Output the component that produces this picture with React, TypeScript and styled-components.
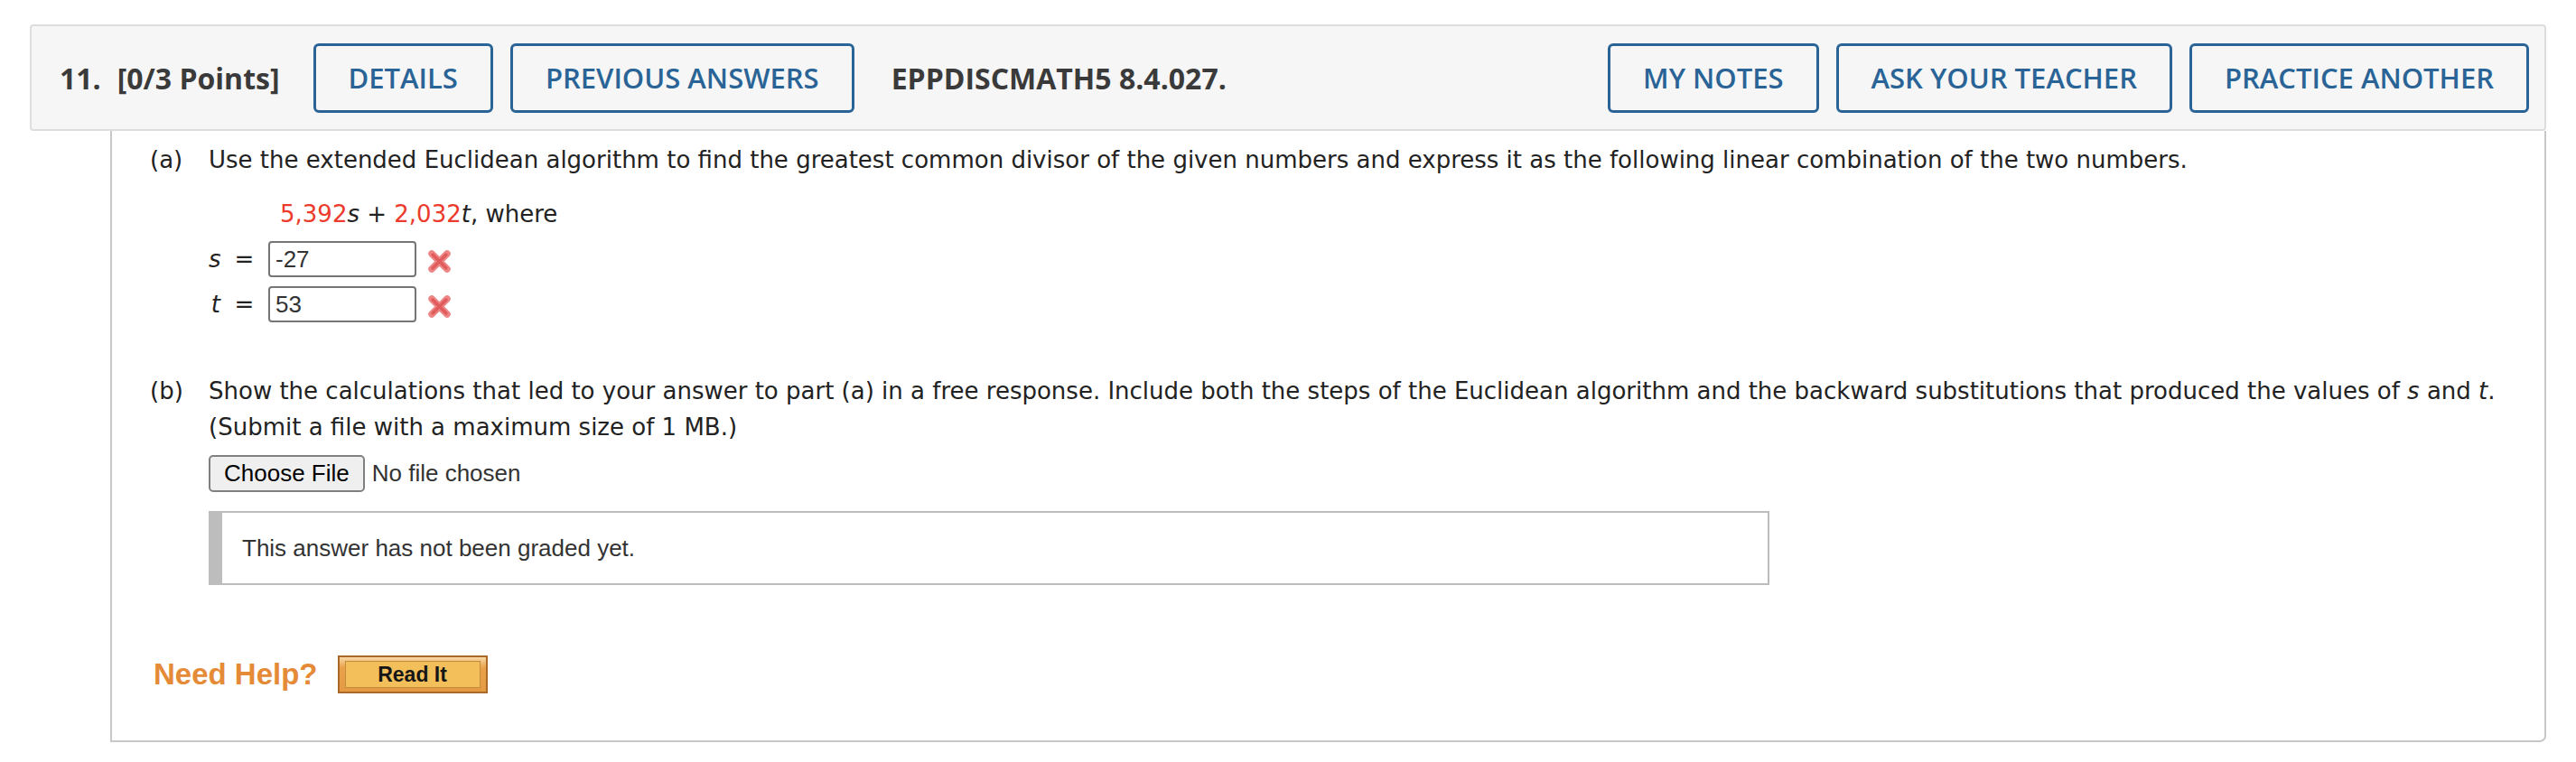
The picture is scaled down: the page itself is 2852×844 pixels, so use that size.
import React from "react";
import styled, { createGlobalStyle } from "styled-components";

const GlobalStyle = createGlobalStyle`
  html, body {
    margin: 0;
    padding: 0;
    background: #ffffff;
  }
  body {
    font-family: "DejaVu Sans", Verdana, sans-serif;
    color: #222;
  }
  * { box-sizing: border-box; }
`;

const Page = styled.div`
  padding: 27px 0 0 33px;
  width: 2819px;
`;

const Header = styled.div`
  display: flex;
  align-items: center;
  height: 118px;
  padding: 0 17px 0 31px;
  background: #f6f6f6;
  border: 2px solid #dddddd;
  border-radius: 4px;
  font-family: "Open Sans", "Liberation Sans", sans-serif;
`;

const QNum = styled.span`
  font-size: 32px;
  font-weight: 700;
  color: #3a3a3a;
  white-space: nowrap;
`;

const Points = styled.span`
  font-size: 32px;
  font-weight: 700;
  color: #3a3a3a;
  margin-left: 18px;
  margin-right: 37px;
  white-space: nowrap;
`;

const HeaderButton = styled.button<{ $gapRight?: number }>`
  height: 77px;
  padding: 0 36px;
  margin-right: ${(p) => p.$gapRight ?? 19}px;
  background: transparent;
  border: 3px solid #2a6496;
  border-radius: 6px;
  color: #2a6496;
  font-family: "Open Sans", "Liberation Sans", sans-serif;
  font-size: 31px;
  font-weight: 600;
  white-space: nowrap;
  cursor: pointer;
  &:last-child { margin-right: 0; }
`;

const Code = styled.span`
  font-size: 32px;
  font-weight: 700;
  color: #3a3a3a;
  white-space: nowrap;
`;

const Spacer = styled.div`
  flex: 1;
`;

const Body = styled.div`
  margin-left: 89px;
  border: 2px solid #c8c8c8;
  border-top: none;
  border-bottom-right-radius: 7px;
  padding: 12px 0 52px 42px;
  font-size: 26px;
  line-height: 40px;
`;

const Part = styled.div<{ $top?: number }>`
  display: flex;
  margin-top: ${(p) => p.$top ?? 0}px;
`;

const PartLabel = styled.div`
  width: 65px;
  flex-shrink: 0;
`;

const PartContent = styled.div`
  flex: 1;
  padding-right: 20px;
`;

const Formula = styled.div`
  margin-top: 20px;
  padding-left: 79px;
  white-space: nowrap;
`;

const Red = styled.span`
  color: #ec3b2d;
`;

const Var = styled.i`
  font-style: italic;
`;

const AnswerRow = styled.div<{ $top: number }>`
  display: flex;
  align-items: center;
  height: 40px;
  margin-top: ${(p) => p.$top}px;
`;

const VarCell = styled.div`
  width: 13px;
  text-align: right;
  font-style: italic;
`;

const EqCell = styled.div`
  width: 53px;
  text-align: center;
`;

const AnswerBox = styled.div`
  width: 164px;
  height: 40px;
  border: 2px solid #757575;
  border-radius: 4px;
  padding: 0 6px;
  font-family: "Liberation Sans", Arial, sans-serif;
  font-size: 26px;
  line-height: 36px;
  color: #333;
  background: #fff;
`;

const WrongMark = styled.svg`
  width: 27px;
  height: 27px;
  margin-left: 12px;
  margin-top: 4px;
`;

const FileRow = styled.div`
  display: flex;
  align-items: center;
  margin-top: 11px;
  font-family: "Liberation Sans", Arial, sans-serif;
  font-size: 26px;
`;

const FileButton = styled.button`
  height: 41px;
  padding: 0 15px;
  background: #efefef;
  border: 2px solid #808080;
  border-radius: 5px;
  font-family: "Liberation Sans", Arial, sans-serif;
  font-size: 26px;
  color: #000;
`;

const FileStatus = styled.span`
  margin-left: 8px;
  color: #333;
  line-height: 41px;
`;

const GradeBox = styled.div`
  display: flex;
  align-items: center;
  width: 1728px;
  height: 82px;
  margin-top: 21px;
  padding-left: 22px;
  border: 2px solid #bdbdbd;
  border-left: 15px solid #bdbdbd;
  font-family: "Liberation Sans", Arial, sans-serif;
  font-size: 26px;
  color: #333;
`;

const HelpRow = styled.div`
  display: flex;
  align-items: center;
  height: 42px;
  margin-top: 78px;
  padding-left: 4px;
`;

const HelpText = styled.span`
  font-family: "Liberation Sans", Arial, sans-serif;
  font-weight: 700;
  font-size: 33px;
  color: #e58b38;
  line-height: 42px;
`;

const ReadItButton = styled.button`
  display: flex;
  align-items: stretch;
  width: 166px;
  height: 42px;
  margin-left: 22px;
  padding: 4px 6px;
  border: 2px solid #a9692b;
  background: linear-gradient(#f7d9a6 0%, #eaa24a 30%, #e39a42 100%);
  cursor: pointer;
`;

const ReadItFace = styled.span`
  flex: 1;
  display: flex;
  align-items: center;
  justify-content: center;
  border: 1px solid #c48a3e;
  background: #f3bf5b;
  font-family: "Liberation Sans", Arial, sans-serif;
  font-weight: 700;
  font-size: 23px;
  color: #161616;
`;

const XIcon = () => (
  <WrongMark viewBox="0 0 27 27">
    <path d="M5 5 L22 22 M22 5 L5 22" stroke="#ee8585" strokeWidth="7.5" strokeLinecap="round" fill="none" />
    <path d="M6 6 L21 21 M21 6 L6 21" stroke="#e05c5c" strokeWidth="3.5" strokeLinecap="round" fill="none" />
  </WrongMark>
);

export default function App() {
  return (
    <>
      <GlobalStyle />
      <Page>
        <Header>
          <QNum>11.</QNum>
          <Points>[0/3 Points]</Points>
          <HeaderButton>DETAILS</HeaderButton>
          <HeaderButton $gapRight={41}>PREVIOUS ANSWERS</HeaderButton>
          <Code>EPPDISCMATH5 8.4.027.</Code>
          <Spacer />
          <HeaderButton>MY NOTES</HeaderButton>
          <HeaderButton>ASK YOUR TEACHER</HeaderButton>
          <HeaderButton>PRACTICE ANOTHER</HeaderButton>
        </Header>
        <Body>
          <Part>
            <PartLabel>(a)</PartLabel>
            <PartContent>
              Use the extended Euclidean algorithm to find the greatest common divisor of the given numbers and express it as the following linear combination of the two numbers.
              <Formula>
                <Red>5,392</Red><Var>s</Var> + <Red>2,032</Red><Var>t</Var>, where
              </Formula>
              <AnswerRow $top={10}>
                <VarCell>s</VarCell>
                <EqCell>=</EqCell>
                <AnswerBox>-27</AnswerBox>
                <XIcon />
              </AnswerRow>
              <AnswerRow $top={10}>
                <VarCell>t</VarCell>
                <EqCell>=</EqCell>
                <AnswerBox>53</AnswerBox>
                <XIcon />
              </AnswerRow>
            </PartContent>
          </Part>
          <Part $top={56}>
            <PartLabel>(b)</PartLabel>
            <PartContent>
              Show the calculations that led to your answer to part (a) in a free response. Include both the steps of the Euclidean algorithm and the backward substitutions that produced the values of <Var>s</Var> and <Var>t</Var>.
              <br />
              (Submit a file with a maximum size of 1 MB.)
              <FileRow>
                <FileButton>Choose File</FileButton>
                <FileStatus>No file chosen</FileStatus>
              </FileRow>
              <GradeBox>This answer has not been graded yet.</GradeBox>
            </PartContent>
          </Part>
          <HelpRow>
            <HelpText>Need Help?</HelpText>
            <ReadItButton>
              <ReadItFace>Read It</ReadItFace>
            </ReadItButton>
          </HelpRow>
        </Body>
      </Page>
    </>
  );
}
